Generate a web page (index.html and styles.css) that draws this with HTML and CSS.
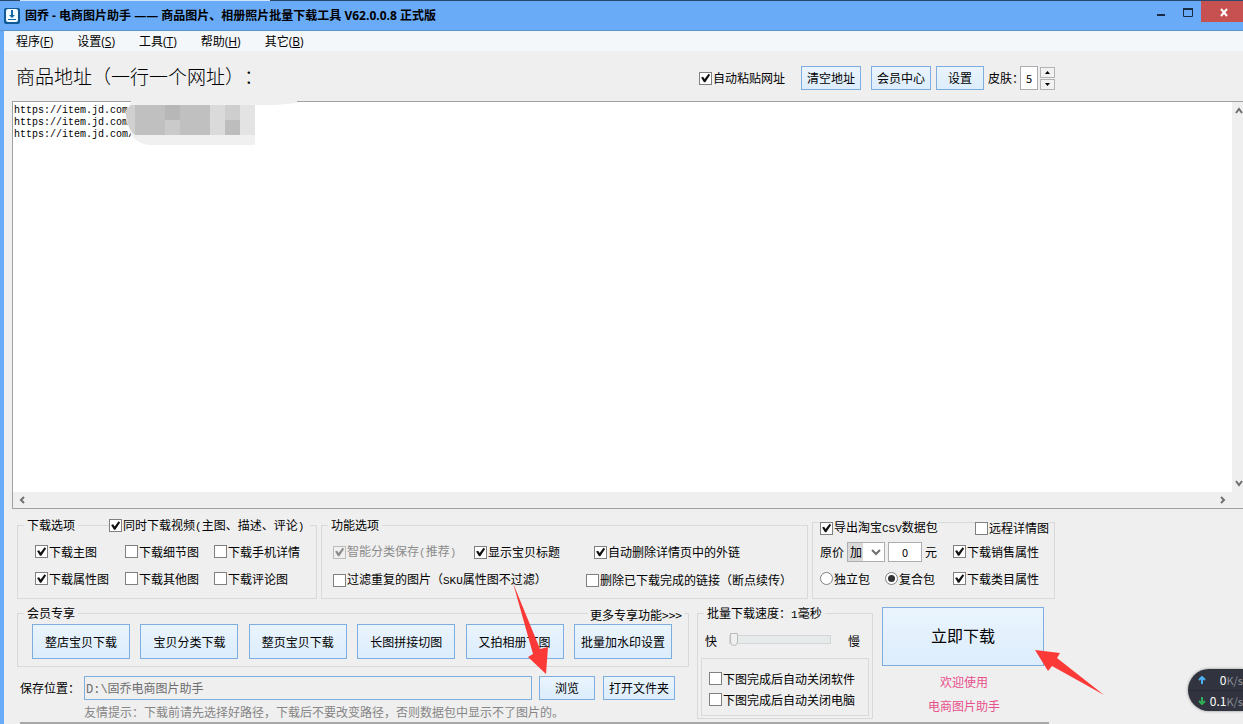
FILE: index.html
```
<!DOCTYPE html>
<html lang="zh-CN">
<head>
	<meta charset="utf-8">
	<title>固乔 - 电商图片助手</title>
	<link rel="stylesheet" href="styles.css">
</head>
<body>
	<div class="desktop-strip"><div class="strip-light"></div></div>
	<header class="titlebar">
		<svg class="app-icon" width="16" height="16" viewBox="0 0 16 16">
			<rect width="16" height="16" rx="2" fill="#0f5a94"/>
			<rect x="2" y="1" width="12" height="13" rx="2" fill="#f4fbff"/>
			<path d="M7 2h2v5h2L8 10 5 7h2z" fill="#1769a5"/>
			<path d="M4 11h8v1H4z" fill="#1769a5"/>
		</svg>
		<h1 class="app-title">固乔 - 电商图片助手 —— 商品图片、相册照片批量下载工具 V62.0.0.8 正式版</h1>
		<div class="window-buttons">
			<button class="win-btn" aria-label="最小化"><svg width="12" height="12"><path d="M2 7h8v2H2z" fill="#1b2b44"/></svg></button>
			<button class="win-btn" aria-label="最大化"><svg width="12" height="12"><path d="M1.500 2.500h9v7h-9z" fill="none" stroke="#1b2b44"/><path d="M1 1h10v2H1z" fill="#1b2b44"/></svg></button>
			<button class="win-btn win-close" aria-label="关闭"><svg width="12" height="12"><path d="M3 2l6 7M9 2l-6 7" stroke="#fff" stroke-width="2"/></svg></button>
		</div>
	</header>
	<div class="window">
		<nav class="menu">
			<a href="#">程序(<u>F</u>)</a>
			<a href="#">设置(<u>S</u>)</a>
			<a href="#">工具(<u>T</u>)</a>
			<a href="#">帮助(<u>H</u>)</a>
			<a href="#">其它(<u>B</u>)</a>
		</nav>
		<div class="toolbar">
			<label class="address-label" for="urls">商品地址（一行一个网址）：</label>
			<div class="toolbar-right">
				<label class="check auto-paste"><input type="checkbox" checked>自动粘贴网址</label>
				<button class="btn btn-60">清空地址</button>
				<button class="btn btn-60 btn-member">会员中心</button>
				<button class="btn btn-48">设置</button>
				<label class="skin-label" for="skin">皮肤：</label>
				<input class="skin" id="skin" type="text" value="5">
				<div class="spinner">
					<button aria-label="增加"><svg width="5" height="3"><path d="M0 3L2.500 0 5 3z"/></svg></button>
					<button aria-label="减少"><svg width="5" height="3"><path d="M0 0l2.500 3L5 0z"/></svg></button>
				</div>
			</div>
		</div>

		<div class="url-box">
			<div class="url-main">
				<textarea class="urls" id="urls" spellcheck="false">https://item.jd.com/
https://item.jd.com/
https://item.jd.com/</textarea>
				<div class="scroll-x">
					<svg width="8" height="8"><path d="M6 1L3 4l3 3" class="chevron"/></svg>
					<svg width="8" height="8"><path d="M2 1l3 3-3 3" class="chevron"/></svg>
				</div>
			</div>
			<div class="scroll-y">
				<svg width="8" height="8"><path d="M1 6l3-4 3 4" class="chevron"/></svg>
				<svg width="8" height="8"><path d="M1 2l3 4 3-4" class="chevron"/></svg>
			</div>
			<svg class="mosaic" width="172" height="48" viewBox="0 0 172 48">
				<path d="M6 0H172V4L150 6H6z" fill="#efefef"/>
				<path d="M6 4H130V46H23Q6 42 4 30L1 20Q1 8 6 4z" fill="#f0f0f0"/>
				<path d="M0 13L6 6H10V36Q4 32 2 20z" fill="#d0d0d0"/>
				<path d="M10 6h75v30H10z" fill="#c0c0c0"/>
				<path d="M40 6h15v15H40z" fill="#b7b7b7"/>
				<path d="M40 21h15v15H40z" fill="#cacaca"/>
				<path d="M85 6h15v30H85z" fill="#dadada"/>
				<path d="M100 6h15v15h-15z" fill="#cecece"/>
				<path d="M100 21h15v15h-15z" fill="#bdbdbd"/>
				<path d="M115 6h15v30h-15z" fill="#e3e3e3"/>
			</svg>
		</div>

		<main class="options">
			<div class="option-row">
				<div class="group group-download" role="group" aria-label="下载选项">
					<div class="group-head">
						<span class="group-title">下载选项</span>
						<label class="check"><input type="checkbox" checked><span>同时下载视频<span class="half">(</span>主图、描述、评论<span class="half">)</span></span></label>
					</div>
					<div class="download-grid">
						<label class="check"><input type="checkbox" checked>下载主图</label>
						<label class="check"><input type="checkbox">下载细节图</label>
						<label class="check"><input type="checkbox">下载手机详情</label>
						<label class="check"><input type="checkbox" checked>下载属性图</label>
						<label class="check"><input type="checkbox">下载其他图</label>
						<label class="check"><input type="checkbox">下载评论图</label>
					</div>
				</div>
				<div class="group group-function" role="group" aria-label="功能选项">
					<div class="group-head">
						<span class="group-title">功能选项</span>
					</div>
					<div class="function-row function-three">
						<label class="check off"><input type="checkbox" checked disabled><span>智能分类保存<span class="half">(</span>推荐<span class="half">)</span></span></label>
						<label class="check"><input type="checkbox" checked>显示宝贝标题</label>
						<label class="check"><input type="checkbox" checked>自动删除详情页中的外链</label>
					</div>
					<div class="function-row function-two">
						<label class="check"><input type="checkbox"><span>过滤重复的图片（<span class="half">SKU</span>属性图不过滤）</span></label>
						<label class="check"><input type="checkbox">删除已下载完成的链接（断点续传）</label>
					</div>
				</div>
				<div class="group group-csv" role="group" aria-label="数据包">
					<div class="group-head">
						<label class="check"><input type="checkbox" checked><span>导出淘宝<span class="half">CSV</span>数据包</span></label>
						<label class="check"><input type="checkbox">远程详情图</label>
					</div>
					<div class="csv-row">
						<div class="price">
							<label for="price-op">原价</label>
							<div class="select-wrap">
								<select id="price-op"><option>加</option></select>
								<svg width="10" height="8"><path d="M1 2l4 4 4-4" class="chevron"/></svg>
							</div>
							<input class="price-value" type="text" value="0" aria-label="金额">
							<span>元</span>
						</div>
						<label class="check"><input type="checkbox" checked>下载销售属性</label>
					</div>
					<div class="csv-row">
						<div class="packs">
							<label class="check"><input type="radio" name="pack">独立包</label>
							<label class="check"><input type="radio" name="pack" checked>复合包</label>
						</div>
						<label class="check"><input type="checkbox" checked>下载类目属性</label>
					</div>
				</div>
			</div>

			<div class="action-row">
				<div class="left-column">
					<div class="group group-member" role="group" aria-label="会员专享">
						<div class="group-head">
							<span class="group-title">会员专享</span>
							<a class="more" href="#">更多专享功能&gt;&gt;&gt;</a>
						</div>
						<div class="member-buttons">
							<button class="btn">整店宝贝下载</button>
							<button class="btn">宝贝分类下载</button>
							<button class="btn">整页宝贝下载</button>
							<button class="btn">长图拼接切图</button>
							<button class="btn">又拍相册下图</button>
							<button class="btn">批量加水印设置</button>
						</div>
					</div>
					<div class="save-row">
						<label for="path">保存位置：</label>
						<input class="path" id="path" type="text" value="D:\固乔电商图片助手" readonly>
						<button class="btn btn-browse">浏览</button>
						<button class="btn btn-folder">打开文件夹</button>
					</div>
					<p class="hint">友情提示：下载前请先选择好路径，下载后不要改变路径，否则数据包中显示不了图片的。</p>
					<svg class="arrow arrow-browse" width="38" height="92" viewBox="0 0 38 92"><path d="M1 0L28 66l8-2-2 27L16 74l5-3z"/></svg>
				</div>
				<div class="group group-speed" role="group" aria-label="批量下载速度">
					<div class="group-head">
						<label class="group-title" for="speed">批量下载速度：<span class="half">1</span>毫秒</label>
					</div>
					<div class="speed-row">
						<span>快</span>
						<input class="speed" id="speed" type="range" min="1" max="100" value="1" disabled>
						<span>慢</span>
					</div>
					<div class="finish-box">
						<label class="check"><input type="checkbox">下图完成后自动关闭软件</label>
						<label class="check"><input type="checkbox">下图完成后自动关闭电脑</label>
					</div>
				</div>
				<div class="start-column">
					<button class="btn btn-start">立即下载</button>
					<p class="welcome">欢迎使用<br>电商图片助手</p>
					<svg class="arrow arrow-start" width="70" height="46" viewBox="0 0 70 46"><path d="M0 0l25 3-3 5 47 37-52-29-4 5z"/></svg>
				</div>
			</div>
			<div class="bottom-line"></div>
		</main>
	</div>

	<div class="net-speed">
		<div class="net-row">
			<svg width="8" height="8"><path d="M4 8V1M1 4l3-3 3 3" stroke="#4db2f0"/></svg>
			<span class="net-value">0</span><span class="net-unit">K/s</span>
		</div>
		<div class="net-row">
			<svg width="8" height="8"><path d="M4 0v7M1 4l3 3 3-3" stroke="#2fae55"/></svg>
			<span class="net-value">0.1</span><span class="net-unit">K/s</span>
		</div>
	</div>
</body>
</html>
```

FILE: styles.css
```
* {
	box-sizing: border-box;
}
body {
	margin: 0;
	height: 100vh;
	display: flex;
	flex-direction: column;
	overflow: hidden;
	position: relative;
	background-color: #6aabf7;
	color: #000;
	font-family: "Noto Sans CJK SC", sans-serif;
	font-size: 12px;
	line-height: 16px;
	text-spacing-trim: space-all;
}
button, input, select, textarea {
	font: inherit;
	color: inherit;
	margin: 0;
	padding: 0;
	border-radius: 0;
	outline: none;
}
a {
	color: inherit;
	text-decoration: none;
}
p {
	margin: 0;
}
svg {
	display: block;
}
.chevron {
	fill: none;
	stroke: #707070;
	stroke-width: 2;
}

/* title bar */
.desktop-strip {
	height: 1px;
	background-color: #28486e;
	padding-left: 20px;
}
.strip-light {
	width: 250px;
	height: 1px;
	background-color: #cfe3fa;
}
.titlebar {
	display: flex;
	align-items: center;
	height: 30px;
	padding-left: 4px;
	border-bottom: 1px solid #5b93cf;
}
.app-title {
	flex: 1;
	margin: 0 0 0 5px;
	font-family: "Open Sans", "Noto Sans CJK SC", sans-serif;
	font-size: 12px;
	font-weight: bold;
	white-space: nowrap;
}
.window-buttons {
	display: flex;
	align-self: flex-start;
}
.win-btn {
	display: flex;
	align-items: center;
	justify-content: center;
	width: 27px;
	height: 21px;
	padding-top: 2px;
	border: none;
	background: none;
}
.win-close {
	width: 42px;
	padding-left: 4px;
	background-color: #c75050;
}

/* menu and toolbar */
.window {
	flex: 1;
	min-height: 0;
	display: flex;
	flex-direction: column;
	margin-left: 4px;
	background-color: #efefef;
}
.menu {
	display: flex;
	gap: 24px;
	height: 20px;
	padding: 3px 12px 0;
	background-color: #f4f7f9;
	font-family: "Open Sans", "Noto Sans CJK SC", sans-serif;
}
.toolbar {
	display: flex;
	align-items: center;
	justify-content: space-between;
	max-width: 1051px;
	height: 50px;
	padding: 4px 0 0 12px;
}
.address-label {
	padding-bottom: 4px;
	font-size: 19px;
	font-weight: 300;
	line-height: 24px;
}
.toolbar-right {
	display: flex;
	align-items: center;
}
.auto-paste {
	margin-right: 16px;
}
.btn {
	height: 24px;
	border: 1px solid #7eaee0;
	background: linear-gradient(#eaf4fd, #dcedfc);
	text-align: center;
	white-space: nowrap;
}
.btn-60 {
	width: 60px;
}
.btn-48 {
	width: 48px;
}
.btn-member {
	margin: 0 5px 0 10px;
}
.skin-label {
	width: 36px;
	padding-left: 4px;
	white-space: nowrap;
}
.skin {
	width: 18px;
	height: 24px;
	border: 1px solid #abadb3;
	background-color: #fff;
	text-align: center;
	font-size: 11px;
}
.spinner {
	display: flex;
	flex-direction: column;
	gap: 1px;
	margin-left: 2px;
}
.spinner button {
	display: flex;
	align-items: center;
	justify-content: center;
	width: 15px;
	height: 11px;
	border: 1px solid #b4b4b4;
	background-color: #f2f2f2;
}

/* check boxes and radios */
.check {
	display: flex;
	align-items: center;
	white-space: nowrap;
}
.check input {
	appearance: none;
	flex: none;
	width: 13px;
	height: 13px;
	margin-right: 1px;
	border: 1px solid #808080;
	background-color: #fff;
}
.check input[type="checkbox"]:checked::after {
	content: "";
	display: block;
	width: 11px;
	height: 11px;
	background-color: #111;
	clip-path: polygon(10% 45%, 28% 38%, 42% 58%, 78% 12%, 92% 22%, 48% 88%, 36% 88%);
}
.check input[type="radio"] {
	border-radius: 50%;
}
.check input[type="radio"]:checked::after {
	content: "";
	display: block;
	width: 7px;
	height: 7px;
	margin: 2px;
	border-radius: 50%;
	background-color: #333;
}
.check.off {
	color: #8c8c8c;
}
.check.off input {
	border-color: #bcbcbc;
	background-color: #efefef;
}
.check.off input[type="checkbox"]:checked::after {
	background-color: #8c8c8c;
}
.half {
	font-family: "Liberation Mono", monospace;
	font-size: 11px;
}

/* address list */
.url-box {
	position: relative;
	flex: 1;
	min-height: 0;
	display: flex;
	margin-left: 8px;
	border: 1px solid #9fa3a5;
	border-right: none;
	background-color: #fff;
}
.url-main {
	flex: 1;
	display: flex;
	flex-direction: column;
}
.urls {
	flex: 1;
	width: 100%;
	padding: 3px 1px;
	border: none;
	resize: none;
	overflow: hidden;
	background: none;
	font-family: "Liberation Mono", monospace;
	font-size: 10px;
	line-height: 12px;
}
.scroll-x {
	display: flex;
	align-items: center;
	justify-content: space-between;
	height: 16px;
	padding: 0 5px;
	background-color: #efefef;
}
.scroll-y {
	display: flex;
	flex-direction: column;
	justify-content: space-between;
	width: 11px;
	padding: 5px 0 21px 3px;
	background-color: #efefef;
}
.mosaic {
	position: absolute;
	left: 112px;
	top: -3px;
}

/* option groups */
.options {
	padding: 13px 0 0 13px;
}
.option-row {
	display: flex;
	align-items: flex-end;
	gap: 4px;
}
.group {
	flex: none;
	border: 1px solid #d9d9d9;
}
.group-head {
	display: flex;
	height: 16px;
	margin-top: -9px;
	padding-left: 6px;
}
.group-head > * {
	background-color: #efefef;
}
.group-title {
	padding: 0 3px;
}
.group-download {
	width: 300px;
	height: 74px;
}
.group-download .group-head {
	gap: 31px;
}
.group-download .group-head .check {
	margin-top: 1px;
	padding-right: 6px;
}
.download-grid {
	display: grid;
	grid-template-columns: 90px 89px auto;
	grid-auto-rows: 27px;
	padding: 5px 0 0 17px;
}
.group-function {
	width: 487px;
	height: 74px;
}
.function-row {
	display: grid;
	height: 28px;
	padding-left: 11px;
}
.group-function .group-head {
	margin-bottom: 5px;
}
.function-three {
	grid-template-columns: 141px 120px auto;
}
.function-two {
	grid-template-columns: 253px auto;
}
.group-csv {
	width: 243px;
	height: 77px;
	padding: 0 5px 0 7px;
}
.group-csv .group-head {
	justify-content: space-between;
	margin: -3px 0 2px;
	padding: 0;
}
.csv-row {
	display: grid;
	grid-template-columns: 133px auto;
	align-items: center;
	height: 27px;
}
.price, .packs {
	display: flex;
	align-items: center;
	gap: 3px;
}
.packs {
	gap: 15px;
}
.select-wrap {
	position: relative;
}
.select-wrap select {
	appearance: none;
	width: 38px;
	height: 20px;
	padding-left: 2px;
	border: 1px solid #abadb3;
	background: linear-gradient(90deg, #d9d9d9 15px, #fff 15px);
}
.select-wrap svg {
	position: absolute;
	right: 4px;
	top: 6px;
}
.price-value {
	width: 34px;
	height: 20px;
	border: 1px solid #abadb3;
	background-color: #fff;
	text-align: center;
	font-size: 11px;
}

/* members, save path */
.action-row {
	display: flex;
	height: 115px;
	margin-top: 8px;
}
.left-column {
	position: relative;
	width: 672px;
	padding-top: 6px;
}
.group-member {
	height: 54px;
}
.group-member .group-head {
	justify-content: space-between;
	padding-right: 4px;
}
.more {
	margin-top: 2px;
	padding: 0 2px;
}
.member-buttons {
	display: flex;
	justify-content: space-between;
	padding: 3px 16px 0 14px;
}
.member-buttons .btn {
	width: 98px;
	height: 35px;
}
.save-row {
	display: flex;
	align-items: center;
	padding: 9px 14px 0 3px;
}
.save-row label {
	width: 64px;
}
.path {
	flex: 1;
	height: 24px;
	padding-left: 1px;
	border: 1px solid #7eaee0;
	background-color: #efefef;
	color: #6d6d6d;
	font-family: "Liberation Mono", "Noto Sans CJK SC", monospace;
}
.btn-browse {
	width: 56px;
	margin: 0 8px 0 7px;
}
.btn-folder {
	width: 72px;
}
.hint {
	padding: 4px 0 0 67px;
	color: #868686;
	white-space: nowrap;
}
.bottom-line {
	width: 1029px;
	height: 2px;
	margin-left: 3px;
	background-color: #a8a8a8;
}

/* speed */
.group-speed {
	width: 176px;
	height: 106px;
	margin: 6px 9px 0 8px;
}
.speed-row {
	display: flex;
	align-items: center;
	height: 37px;
	padding: 3px 12px 0 7px;
}
.speed {
	appearance: none;
	width: 102px;
	height: 14px;
	margin: 0 auto 4px 12px;
	background: none;
}
.speed::-webkit-slider-runnable-track {
	height: 9px;
	border: 1px solid #d2d6d6;
	background-color: #e6eaea;
}
.speed::-webkit-slider-thumb {
	appearance: none;
	width: 8px;
	height: 13px;
	margin-top: -3px;
	border: 1px solid #bcbcbc;
	border-radius: 0 0 4px 4px;
	background-color: #efefef;
}
.finish-box {
	margin: 0 3px;
	padding: 9px 0 5px 7px;
	border: 1px solid #d9d9d9;
}
.finish-box .check {
	height: 21px;
}

/* start button */
.start-column {
	position: relative;
	width: 162px;
}
.btn-start {
	width: 100%;
	height: 59px;
	padding-bottom: 3px;
	font-size: 16px;
}
.welcome {
	padding: 4px 0 0 2px;
	color: #e8508c;
	line-height: 24px;
	text-align: center;
}
.arrow {
	position: absolute;
	z-index: 5;
	fill: #fb3a38;
}
.arrow-browse {
	left: 495px;
	top: -24px;
}
.arrow-start {
	left: 153px;
	top: 43px;
}

/* network widget */
.net-speed {
	position: absolute;
	right: 0;
	bottom: 13px;
	width: 55px;
	height: 42px;
	overflow: hidden;
	border-radius: 21px 0 0 21px;
	background-color: #31343f;
	box-shadow: 0 0 3px #888;
}
.net-row {
	display: flex;
	align-items: center;
	height: 21px;
	padding-left: 10px;
}
.net-row + .net-row {
	border-top: 1px solid #292c36;
}
.net-row path {
	fill: none;
	stroke-width: 2;
}
.net-value {
	width: 22px;
	color: #fff;
	text-align: right;
}
.net-unit {
	color: #8b8e98;
	font-size: 11px;
}
```
